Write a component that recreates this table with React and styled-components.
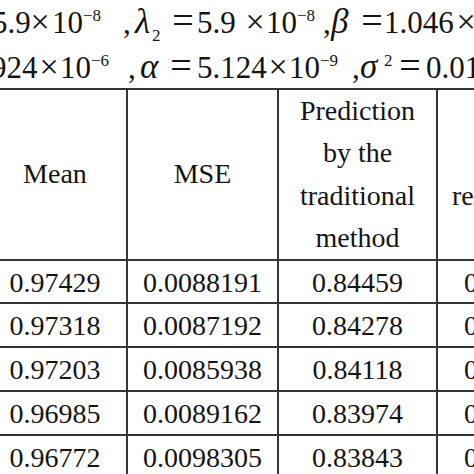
import React from "react";
import styled, { createGlobalStyle } from "styled-components";

const Global = createGlobalStyle`
  html, body {
    margin: 0;
    padding: 0;
    background: #fff;
    overflow: hidden;
  }
  body {
    width: 474px;
    height: 474px;
    font-family: "Liberation Serif", "Times New Roman", serif;
    color: #141414;
  }
`;

const Page = styled.div`
  width: 474px;
  height: 474px;
  overflow: hidden;
  font-family: "Liberation Serif", "Times New Roman", serif;
`;

const Formula = styled.div`
  height: 88px;
  font-size: 31px;
  white-space: nowrap;
`;

const FLine = styled.div`
  height: 45px;
  line-height: 45px;
  margin-left: ${({ $x }) => $x}px;
`;

const Tok = styled.span`
  display: inline-block;
  width: ${({ $w }) => ($w == null ? "auto" : `${$w}px`)};
`;

const OpGlyph = styled.span`
  display: inline-block;
  width: 24px;
  text-align: center;
  font-size: ${({ $size }) => $size}px;
  line-height: 30px;
`;

const Greek = styled(Tok)`
  font-style: italic;
  font-size: 35px;
  line-height: 35px;
`;

const Script = styled(Tok)`
  font-size: 17px;
  line-height: 17px;
  vertical-align: ${({ $up }) => $up}px;
`;

const Table = styled.table`
  border-collapse: collapse;
  table-layout: fixed;
  margin-left: -18px;
  width: 599px;
  font-family: "Liberation Serif", "Times New Roman", serif;
  color: #141414;
`;

const Cell = styled.td`
  border: 2px solid #353535;
  padding: 0;
  text-align: center;
  vertical-align: middle;
  font-family: "Liberation Serif", "Times New Roman", serif;
  font-size: 28px;
  font-weight: normal;
  height: ${({ $h }) => $h}px;
  white-space: nowrap;
`;

const HeadText = styled.div`
  line-height: 42.25px;
`;

const DataText = styled.div`
  padding-top: 2px;
`;

// token: [text, kind, box start x]; operators are given by their centre
const line1 = [
  ["5.9", "n", -8],
  ["×", "op", 40],
  ["10", "n", 52],
  ["−8", "sup", 83],
  [",", "n", 123],
  ["λ", "g", 135],
  ["2", "sub", 152],
  ["=", "op", 183],
  ["5.9", "n", 197],
  ["×", "op", 255],
  ["10", "n", 266],
  ["−8", "sup", 297],
  [",", "n", 323],
  ["β", "g", 331],
  ["=", "op", 372],
  ["1.046", "n", 384],
  ["×", "op", 466],
];

const line2 = [
  ["924", "n", -9],
  ["×", "op", 49],
  ["10", "n", 60],
  ["−6", "sup", 91],
  [",", "n", 128],
  ["α", "g", 140],
  ["=", "op", 181],
  ["5.124", "n", 197],
  ["×", "op", 278],
  ["10", "n", 289],
  ["−9", "sup", 320],
  [",", "n", 352],
  ["σ", "g", 360],
  ["2", "sup", 384],
  ["=", "op", 410],
  ["0.0125", "n", 426],
];

const boxStart = ([, kind, x]) => (kind === "op" ? x - 12 : x);

function MathLine({ tokens }) {
  return (
    <FLine $x={boxStart(tokens[0])}>
      {tokens.map((tok, i) => {
        const [t, kind] = tok;
        const next = tokens[i + 1];
        const w = next ? boxStart(next) - boxStart(tok) : null;
        if (kind === "g") return <Greek key={i} $w={w}>{t}</Greek>;
        if (kind === "op")
          return (
            <Tok key={i} $w={w}>
              <OpGlyph $size={t === "=" ? 38 : 34}>{t}</OpGlyph>
            </Tok>
          );
        if (kind === "sup") return <Script key={i} $w={w} $up={12}>{t}</Script>;
        if (kind === "sub") return <Script key={i} $w={w} $up={-8}>{t}</Script>;
        return <Tok key={i} $w={w}>{t}</Tok>;
      })}
    </FLine>
  );
}

const headers = [
  ["Mean"],
  ["MSE"],
  ["Prediction", "by the", "traditional", "method"],
  ["The", "linear", "regression", "result"],
];

const rows = [
  ["0.97429", "0.0088191", "0.84459", "0.85217"],
  ["0.97318", "0.0087192", "0.84278", "0.85106"],
  ["0.97203", "0.0085938", "0.84118", "0.84991"],
  ["0.96985", "0.0089162", "0.83974", "0.84853"],
  ["0.96772", "0.0098305", "0.83843", "0.84712"],
];

const widths = [144, 151, 159, 145];

export default function App() {
  return (
    <Page>
      <Global />
      <Formula>
        <MathLine tokens={line1} />
        <MathLine tokens={line2} />
      </Formula>
      <Table>
        <colgroup>
          {widths.map((w, i) => (
            <col key={i} style={{ width: w }} />
          ))}
        </colgroup>
        <tbody>
          <tr>
            {headers.map((lines, i) => (
              <Cell as="th" key={i} $h={169}>
                {lines.map((l, j) => (
                  <HeadText key={j}>{l}</HeadText>
                ))}
              </Cell>
            ))}
          </tr>
          {rows.map((r, i) => (
            <tr key={i}>
              {r.map((v, j) => (
                <Cell key={j} $h={i === 0 ? 41 : 42}>
                  <DataText>{v}</DataText>
                </Cell>
              ))}
            </tr>
          ))}
        </tbody>
      </Table>
    </Page>
  );
}
